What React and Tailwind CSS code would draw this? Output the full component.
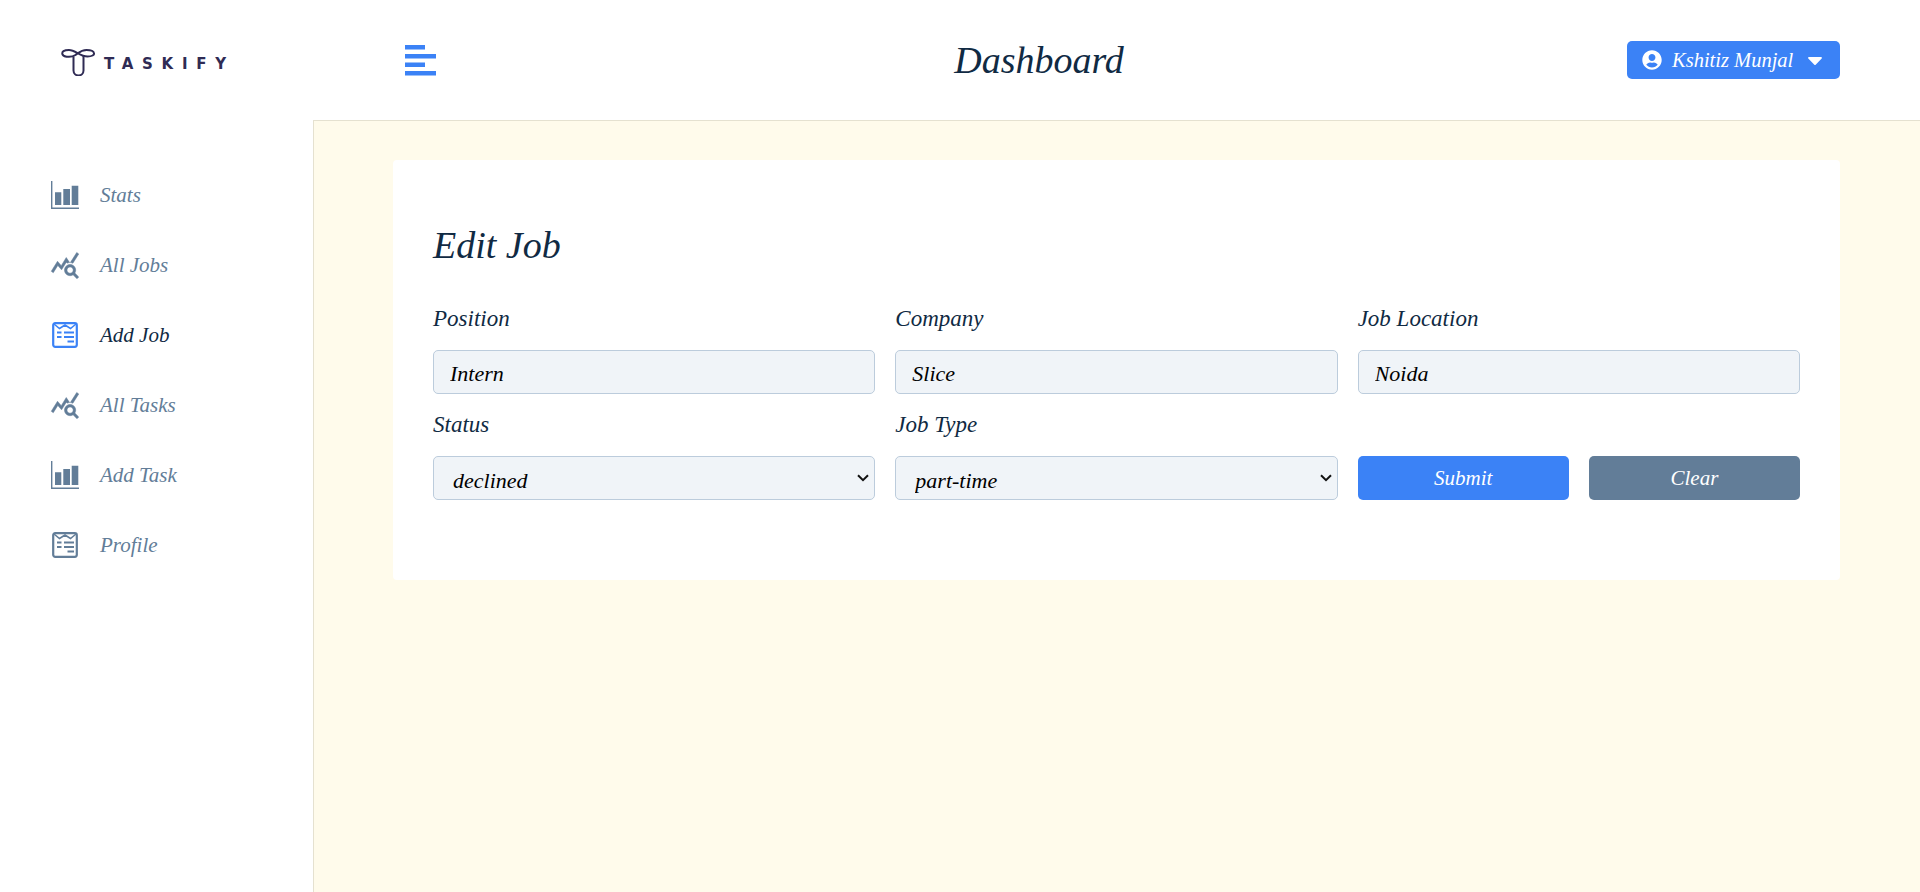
import React from 'react';
import { FaUserCircle, FaCaretDown } from 'react-icons/fa';

function StatsIcon({ className }) {
  return (
    <svg viewBox="0 0 28 28" className={className} fill="currentColor">
      <path d="M0 0h1.4v26.6H28V28H0z" />
      <path d="M4 11.3h6.3V24H4zM12.3 8H19v16h-6.7zM20.7 4.7h6.6V24h-6.6z" />
    </svg>
  );
}

function QueryIcon({ className }) {
  return (
    <svg viewBox="0 0 24 24" className={className} fill="currentColor" stroke="currentColor" strokeWidth="0.4">
      <path d="M19.88 18.47c.44-.7.7-1.51.7-2.39 0-2.49-2.01-4.5-4.5-4.5s-4.5 2.01-4.5 4.5 2.01 4.5 4.49 4.5c.88 0 1.7-.26 2.39-.7L21.58 23 23 21.58l-3.12-3.11zm-3.8.11c-1.38 0-2.5-1.12-2.5-2.5s1.12-2.5 2.5-2.5 2.5 1.12 2.5 2.5-1.12 2.5-2.5 2.5zm-.36-8.5c-.74.02-1.45.18-2.1.45l-.55-.83-3.8 6.18-3.01-3.52-3.63 5.81L1 17l5-8 3 3.5L13 6l2.72 4.08zm2.59.5c-.64-.28-1.33-.45-2.05-.49L21.380 2 23 3.180l-4.690 7.400z" />
    </svg>
  );
}

function FormIcon({ className }) {
  return (
    <svg viewBox="0 0 28 28" className={className} fill="none" stroke="currentColor">
      <rect x="2.2" y="2.2" width="23.6" height="23.6" rx="2" strokeWidth="2.2" />
      <path d="M3 3l5.500 4.500L14 4l5.500 3.500L25 3" strokeWidth="1.500" />
      <path d="M6 11.500h4.500M13 11.500h10M6 16h4.500M13 16h10M16.500 20.500H23" strokeWidth="1.800" />
    </svg>
  );
}

function Logo() {
  return (
    <svg viewBox="0 0 34 27" className="w-[34px] h-[27px]" fill="none" stroke="#2f2b54" strokeWidth="2">
      <path d="M1.500 5.500C.5 2.500 3 1 8 1c6.500 0 11 6.500 18.500 6.500 4.500 0 7-1.500 6.500-3.500C32.500 1.500 28.500 1 25.500 1 20 1 17.500 4 14.500 6c-2 1.300-3.800 1.800-6.500 1.800-3 0-5.500-.3-6.500-2.300z" />
      <path d="M12.500 7.500V21.500a5 5 0 0 0 10 0V6.500" />
    </svg>
  );
}

const navItems = [
  { label: 'Stats', icon: StatsIcon },
  { label: 'All Jobs', icon: QueryIcon, wide: true },
  { label: 'Add Job', icon: FormIcon, active: true },
  { label: 'All Tasks', icon: QueryIcon, wide: true },
  { label: 'Add Task', icon: StatsIcon },
  { label: 'Profile', icon: FormIcon },
];

function Field({ label, value }) {
  return (
    <div>
      <label className="block h-10 mb-2.5 leading-[38px] text-[23px] text-[#102a43]">{label}</label>
      <input
        type="text"
        defaultValue={value}
        className="w-full h-11 px-4 pt-1 rounded-[5px] border border-[#bcccdc] bg-[#f0f4f8] text-[22px] text-black"
      />
    </div>
  );
}

function SelectField({ label, value, options }) {
  return (
    <div>
      <label className="block h-10 mb-2.5 leading-[38px] text-[23px] text-[#102a43]">{label}</label>
      <div className="relative">
        <select
          defaultValue={value}
          className="block w-full h-11 pl-[19px] pr-4 pt-1 appearance-none rounded-[5px] border border-[#bcccdc] bg-[#f0f4f8] text-[22px] text-black"
        >
          {options.map((o) => (
            <option key={o} value={o}>{o}</option>
          ))}
        </select>
        <svg viewBox="0 0 12 8" className="absolute right-[6px] top-[18px] w-3 h-2 pointer-events-none" fill="none" stroke="#111" strokeWidth="2">
          <path d="M1 1.200l5 5 5-5" />
        </svg>
      </div>
    </div>
  );
}

export default function App() {
  return (
    <div className="h-[892px] overflow-hidden grid grid-cols-[313px_1fr] bg-white font-['Liberation_Serif',serif] italic text-[#102a43]">
      {/* Sidebar */}
      <aside>
        <div className="h-[120px] pl-[61px] flex items-center gap-[9px] pt-[5px]">
          <Logo />
          <span className="font-['DejaVu_Sans',sans-serif] not-italic font-bold text-[15px] tracking-[8.700px] text-[#2f2b54] mt-[3px]">TASKIFY</span>
        </div>
        <nav className="pt-[41px]">
          {navItems.map(({ label, icon: Icon, active, wide }) => (
            <a key={label} href="#" className={`h-[70px] pl-[51px] flex items-center gap-[21px] text-[21px] ${active ? 'text-[#102a43]' : 'text-[#627d98]'}`}>
              <span className={`w-7 h-7 -mt-[2px] flex items-center justify-center ${active ? 'text-[#3b82f6]' : 'text-[#627d98]'}`}>
                <Icon className={wide ? 'w-[30px] h-[30px] shrink-0' : 'w-7 h-7 shrink-0'} />
              </span>
              {label}
            </a>
          ))}
        </nav>
      </aside>

      <div className="flex flex-col min-w-0">
        {/* Navbar */}
        <header className="h-[120px] px-20 flex items-center justify-between">
          <button className="pl-3 pr-[15px] text-[#3b82f6]">
            <svg viewBox="0 0 31 31" className="w-[31px] h-[31px]" fill="currentColor">
              <path d="M0 0h20v4.500H0zM0 9h31v4.500H0zM0 17.500h20V22H0zM0 26h31v4.500H0z" />
            </svg>
          </button>
          <h3 className="text-[38px] leading-none">Dashboard</h3>
          <button className="w-[213px] h-[38px] pl-[15px] rounded-[5px] bg-[#3b82f6] text-white text-[20.500px] flex items-center gap-2.5">
            <FaUserCircle className="w-5 h-5" />
            Kshitiz Munjal
            <FaCaretDown className="w-6 h-6" />
          </button>
        </header>

        {/* Main */}
        <main className="flex-1 pl-[79px] pr-20 pt-[39px] bg-[#fffbeb] border-l border-t border-[#e5e1d0]">
          <form className="bg-white rounded px-10 pt-10 pb-20">
            <h3 className="h-[90px] mb-2.5 flex items-center text-[38px] leading-none">Edit Job</h3>
            <div className="grid grid-cols-3 gap-x-5 gap-y-3 items-end">
              <Field label="Position" value="Intern" />
              <Field label="Company" value="Slice" />
              <Field label="Job Location" value="Noida" />
              <SelectField label="Status" value="declined" options={['interview', 'declined', 'pending']} />
              <SelectField label="Job Type" value="part-time" options={['full-time', 'part-time', 'remote', 'internship']} />
              <div className="grid grid-cols-2 gap-5">
                <button type="button" className="h-11 pt-0.5 rounded-[5px] bg-[#3b82f6] text-white text-[21px]">Submit</button>
                <button type="button" className="h-11 pt-0.5 rounded-[5px] bg-[#627d98] text-white text-[21px]">Clear</button>
              </div>
            </div>
          </form>
        </main>
      </div>
    </div>
  );
}
